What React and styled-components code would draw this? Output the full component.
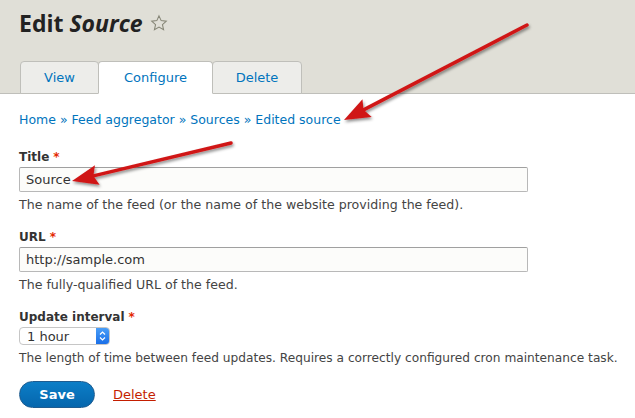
import React from "react"
import styled, { createGlobalStyle } from "styled-components"

const GlobalStyle = createGlobalStyle`
  body {
    margin: 0;
    background: #ffffff;
    font-family: "DejaVu Sans", "Open Sans", sans-serif;
    color: #333333;
  }
`

const Page = styled.div`
  position: relative;
  width: 635px;
  height: 418px;
  overflow: hidden;
`

const Header = styled.div`
  background: #e0dfd7;
  border-bottom: 1px solid #bfbfba;
  padding: 5px 0 0 19px;
  height: 88px;
  box-sizing: content-box;
  display: flex;
  flex-direction: column;
  justify-content: space-between;
`

const TitleRow = styled.h1`
  margin: 0;
  display: flex;
  align-items: center;
  gap: 7px;
  font-family: "Open Sans", sans-serif;
  font-size: 23px;
  font-weight: 700;
  color: #222222;
  height: 36px;
`

const Tabs = styled.ul`
  display: flex;
  margin: 0 0 -1px 1px;
  padding: 0;
  list-style: none;
`

const Tab = styled.li`
  width: ${p => p.$w}px;
  height: 33px;
  box-sizing: border-box;
  display: flex;
  align-items: center;
  justify-content: center;
  padding-bottom: 1px;
  margin-right: -1px;
  font-size: 13px;
  color: #0074bd;
  background: ${p => (p.$active ? "#ffffff" : "#ededea")};
  border: 1px solid #bfbfba;
  border-bottom: ${p => (p.$active ? "1px solid #ffffff" : "1px solid #bfbfba")};
  border-radius: 4px 4px 0 0;
  position: relative;
  z-index: ${p => (p.$active ? 1 : 0)};
`

const Content = styled.div`
  padding: 18px 0 0 19px;
`

const Crumbs = styled.div`
  font-size: 12.5px;
  color: #0074bd;
  margin-bottom: 21px;
  line-height: 16px;
`

const Field = styled.div`
  margin-bottom: 16px;
`

const Label = styled.div`
  font-size: 12px;
  font-weight: 700;
  color: #333333;
  line-height: 16px;
  margin-bottom: 2px;
`

const Req = styled.span`
  color: #e32700;
  margin-left: 4px;
`

const Input = styled.div`
  width: 509px;
  height: 25px;
  box-sizing: border-box;
  border: 1px solid #b8b8b8;
  border-top-color: #a0a0a0;
  border-radius: 2px;
  background: #fcfcfa;
  font-size: 13px;
  color: #333333;
  padding: 0 6px;
  display: flex;
  align-items: center;
`

const Select = styled.div`
  width: 91px;
  height: 18px;
  box-sizing: border-box;
  border: 1px solid #c6c6c6;
  border-radius: 4px;
  background: #ffffff;
  display: flex;
  align-items: center;
  font-size: 13px;
  overflow: hidden;
  margin-bottom: 1px;
`

const SelectText = styled.span`
  flex: 1;
  padding-left: 7px;
`

const SelectArrow = styled.span`
  width: 13px;
  height: 100%;
  background: linear-gradient(#4a9ef7, #1a6fe8);
  display: flex;
  align-items: center;
  justify-content: center;
`

const Desc = styled.div`
  font-size: ${p => (p.$tight ? "12.2px" : "12.6px")};
  color: #444444;
  margin-top: 5px;
  line-height: 16px;
  white-space: nowrap;
`

const Actions = styled.div`
  display: flex;
  align-items: center;
  gap: 18px;
  margin-top: -1px;
`

const SaveButton = styled.button`
  width: 76px;
  height: 27px;
  border: 1px solid #1e5c90;
  border-radius: 14px;
  background: linear-gradient(#0c7ec7, #0566ad);
  color: #ffffff;
  font-family: inherit;
  font-size: 13px;
  font-weight: 700;
`

const DeleteLink = styled.a`
  font-size: 13px;
  color: #c41e00;
  text-decoration: underline;
`

const Arrows = styled.svg`
  position: absolute;
  left: 0;
  top: 0;
  pointer-events: none;
`

const Star = () => (
  <svg width="18" height="18" viewBox="0 0 24 24" fill="none" stroke="#868677" strokeWidth="1.4">
    <path d="M12 2.5l2.9 6.3 6.8.7-5.1 4.6 1.5 6.7L12 17.4l-6.1 3.4 1.5-6.7-5.1-4.6 6.8-.7z" />
  </svg>
)

const Arrow = ({ x1, y1, x2, y2 }) => {
  const dx = x2 - x1
  const dy = y2 - y1
  const len = Math.hypot(dx, dy)
  const ux = dx / len
  const uy = dy / len
  const hl = 26
  const hw = 10
  const bx = x2 - ux * hl
  const by = y2 - uy * hl
  const head = `${x2},${y2} ${bx - uy * hw},${by + ux * hw} ${bx + ux * 4},${by + uy * 4} ${bx + uy * hw},${by - ux * hw}`
  return (
    <g filter="url(#shadow)">
      <line x1={x1} y1={y1} x2={bx + ux * 4} y2={by + uy * 4} stroke="#d01818" strokeWidth="3.5" strokeLinecap="round" />
      <polygon points={head} fill="#d01818" />
    </g>
  )
}

const App = () => {
  return (
    <Page>
      <GlobalStyle />
      <Header>
        <TitleRow>
          <span>
            Edit <i>Source</i>
          </span>
          <Star />
        </TitleRow>
        <Tabs>
          <Tab $w={79}>View</Tab>
          <Tab $w={115} $active>Configure</Tab>
          <Tab $w={90}>Delete</Tab>
        </Tabs>
      </Header>
      <Content>
        <Crumbs>Home » Feed aggregator » Sources » Edited source</Crumbs>
        <Field>
          <Label>
            Title<Req>*</Req>
          </Label>
          <Input>Source</Input>
          <Desc>The name of the feed (or the name of the website providing the feed).</Desc>
        </Field>
        <Field>
          <Label>
            URL<Req>*</Req>
          </Label>
          <Input>http://sample.com</Input>
          <Desc>The fully-qualified URL of the feed.</Desc>
        </Field>
        <Field>
          <Label>
            Update interval<Req>*</Req>
          </Label>
          <Select>
            <SelectText>1 hour</SelectText>
            <SelectArrow>
              <svg width="7" height="12" viewBox="0 0 7 12" fill="none" stroke="#ffffff" strokeWidth="1.2">
                <path d="M1 4.5l2.5-2.5 2.5 2.5M1 7.5l2.5 2.5 2.5-2.5" />
              </svg>
            </SelectArrow>
          </Select>
          <Desc $tight>The length of time between feed updates. Requires a correctly configured cron maintenance task.</Desc>
        </Field>
        <Actions>
          <SaveButton>Save</SaveButton>
          <DeleteLink>Delete</DeleteLink>
        </Actions>
      </Content>
      <Arrows width="635" height="418">
        <defs>
          <filter id="shadow" x="-20%" y="-20%" width="140%" height="140%">
            <feDropShadow dx="1" dy="2" stdDeviation="1.8" floodColor="#000000" floodOpacity="0.45" />
          </filter>
        </defs>
        <Arrow x1={527} y1={25} x2={344} y2={120} />
        <Arrow x1={231} y1={143} x2={72} y2={181} />
      </Arrows>
    </Page>
  )
}

export default App
